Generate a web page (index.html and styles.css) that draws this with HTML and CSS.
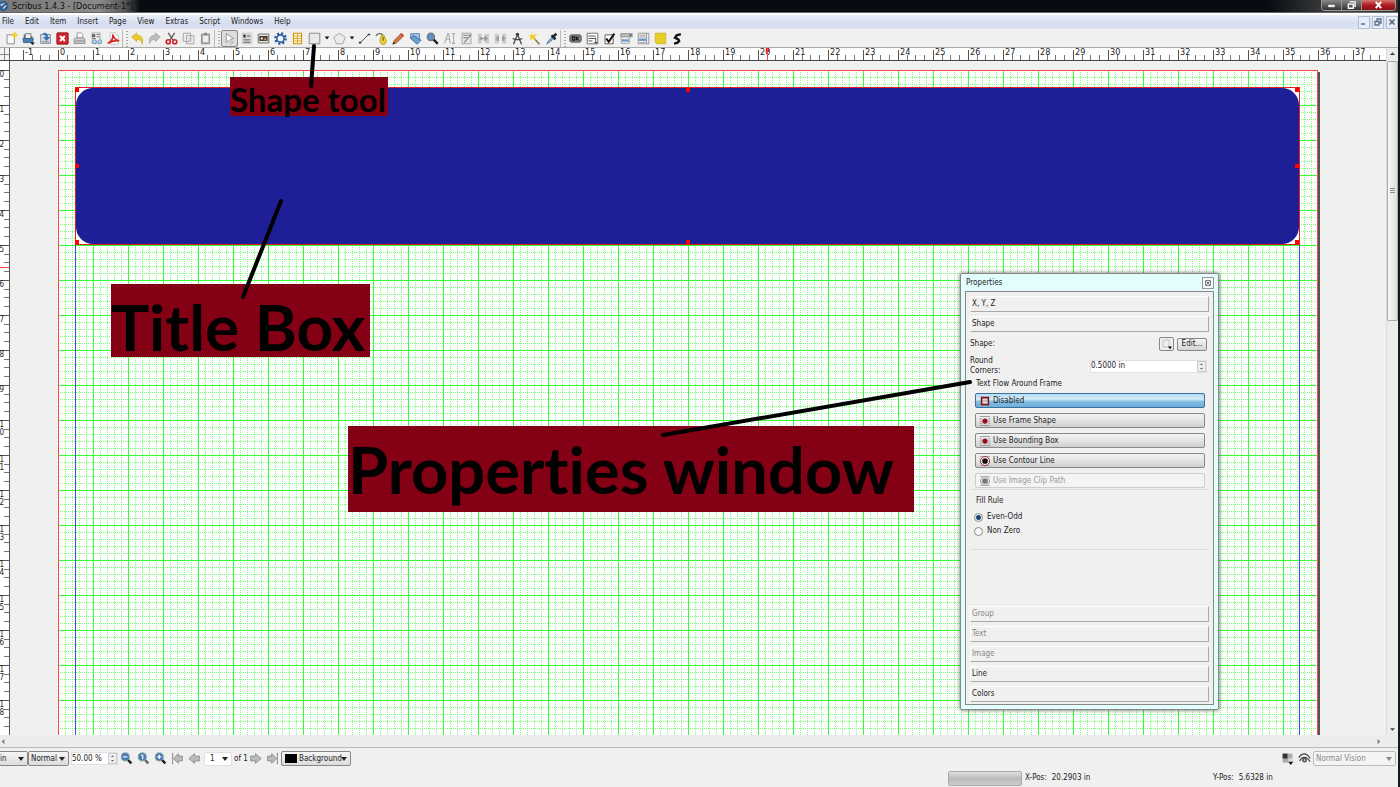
FILE: index.html
```html
<!DOCTYPE html>
<html lang="en">
<head>
<meta charset="utf-8">
<title>Scribus 1.4.3 - [Document-1*]</title>
<link rel="stylesheet" href="styles.css">
</head>
<body>
<div class="app">
  <header class="titlebar">
    <svg class="logo" viewBox="0 0 12 12"><circle cx="4" cy="6" r="6" fill="#2d5f9a"/><path d="M0 4l6-2 2 4-4 4z" fill="#b8cbe2"/><path d="M2 8l5-5" stroke="#15263f" stroke-width="1.5"/></svg>
    <h1 class="title">Scribus 1.4.3 - [Document-1*]</h1>
    <div class="winbtns">
      <button class="winbtn" aria-label="Minimize"><svg viewBox="0 0 10 10"><path d="M1 4h8v3H1z" fill="#fff" stroke="#333" stroke-width=".5"/></svg></button>
      <button class="winbtn" aria-label="Restore"><svg viewBox="0 0 10 10"><path d="M3 1h6v5H8M1.500 3.500h5.500v4.500H1.500z" fill="none" stroke="#fff" stroke-width="1.500"/></svg></button>
      <button class="winbtn close" aria-label="Close"><svg viewBox="0 0 10 10"><path d="M2 1l6 7M8 1L2 8" stroke="#fff" stroke-width="2.200"/></svg></button>
    </div>
  </header>

  <nav class="menubar">
    <a href="#">File</a><a href="#">Edit</a><a href="#">Item</a><a href="#">Insert</a><a href="#">Page</a><a href="#">View</a><a href="#">Extras</a><a href="#">Script</a><a href="#">Windows</a><a href="#">Help</a>
    <div class="mdi">
      <button aria-label="Minimize document"><svg viewBox="0 0 10 10"><path d="M2 7h4" stroke="#5a7088" stroke-width="1.500"/></svg></button>
      <button aria-label="Restore document"><svg viewBox="0 0 10 10"><path d="M4 4V2h4v4H6M2 4.500h4V8H2z" fill="none" stroke="#5a7088" stroke-width="1.300"/></svg></button>
      <button aria-label="Close document"><svg viewBox="0 0 10 10"><path d="M2.500 2.500l5 5M7.500 2.500l-5 5" stroke="#555e68" stroke-width="1.500"/></svg></button>
    </div>
  </nav>

  <div class="toolbar">
    <div class="group">
      <button aria-label="New"><svg viewBox="0 0 16 16"><path d="M2.500 3.500h9v11h-9z" fill="#fafafa" stroke="#777"/><circle cx="12" cy="4" r="3" fill="#f3de3c"/><path d="M12 0v8M8 4h8" stroke="#e8d030"/></svg></button>
      <button aria-label="Open"><svg viewBox="0 0 16 16"><path d="M2 3h5l1 2h5v8H2z" fill="#777"/><path d="M4 2h7v6H4z" fill="#eee" stroke="#666"/><path d="M1 8h13l-1 5H2z" fill="#4a80b8" stroke="#335e8d"/><path d="M10 13h6l-3 3z" fill="#111"/></svg></button>
      <button aria-label="Save"><svg viewBox="0 0 16 16"><path d="M2 3h12v11H2z" fill="#d5dbe1" stroke="#6f8091"/><path d="M6 1c4 0 5 2 5 5h3l-5 5-4-5h3c0-2-1-3-4-3z" fill="#3a73b5"/><path d="M4 12h8" stroke="#678"/></svg></button>
      <button aria-label="Close"><svg viewBox="0 0 16 16"><rect x="1" y="1" width="14" height="14" rx="1" fill="#cf2530" stroke="#941019"/><path d="M5 5l6 6M11 5l-6 6" stroke="#fff" stroke-width="2.500"/></svg></button>
      <button aria-label="Print"><svg viewBox="0 0 16 16"><path d="M5 7V1h5l2 2v4" fill="#fff" stroke="#888"/><path d="M1.500 9l2-2h9l2 2v5h-13z" fill="#ccc" stroke="#777"/><path d="M3 11h10" stroke="#777"/></svg></button>
      <button aria-label="Preflight"><svg viewBox="0 0 16 16"><path d="M2.500 1h10v13h-10z" fill="#f4f4f4" stroke="#aaa"/><path d="M3 3h3v3H3zM8 3h4M8 6h4M3 8h4" stroke="#555" fill="#777"/><circle cx="5.500" cy="12" r="2.500" fill="#b8d2ec" stroke="#5885b3"/><circle cx="12" cy="12" r="2.500" fill="#b8d2ec" stroke="#5885b3"/></svg></button>
      <button aria-label="Export PDF"><svg viewBox="0 0 16 16"><path d="M4 1h6l4 4v10H4z" fill="#fff" stroke="#bbb"/><path d="M1 14c5-3 7-7 6-11 1 5 4 7 8 8-5-1-9 0-14 3z" fill="none" stroke="#d8241c" stroke-width="2"/></svg></button>
    </div>
    <span class="handle"></span>
    <div class="group">
      <button aria-label="Undo"><svg viewBox="0 0 16 16"><path d="M1 6l6-5v3c6 0 8 3 7 11-1-4-3-6-7-6v3z" fill="#edc92a" stroke="#c99d12" stroke-width=".7"/></svg></button>
      <button aria-label="Redo"><svg viewBox="0 0 16 16"><path d="M15 6L9 1v3C3 4 1 7 2 14c1-3 3-5 7-5v3z" fill="#bbb" stroke="#999" stroke-width=".7"/></svg></button>
      <button aria-label="Cut"><svg viewBox="0 0 16 16"><path d="M4 1l6 9M12 1L6 10" stroke="#666" stroke-width="1.800"/><circle cx="4" cy="12" r="2.500" fill="none" stroke="#cc2027" stroke-width="2"/><circle cx="12" cy="12" r="2.500" fill="none" stroke="#cc2027" stroke-width="2"/></svg></button>
      <button aria-label="Copy"><svg viewBox="0 0 16 16"><path d="M1.500 1.500h9v10h-9zM5.500 4.500h9v10h-9z" fill="#eee" stroke="#999"/><path d="M8 8h4M8 10h4" stroke="#bbb"/></svg></button>
      <button aria-label="Paste"><svg viewBox="0 0 16 16"><path d="M3 2.500h10v12H3z" fill="#aaa" stroke="#888"/><path d="M5 4.500h6.500v8H5z" fill="#eee"/><path d="M6 1h4v3H6z" fill="#888"/></svg></button>
    </div>
    <span class="handle"></span>
    <div class="group">
      <button class="pressed" aria-label="Select item"><svg viewBox="0 0 16 16"><path d="M4 2l9 6-4 1 3 4-2 1-3-4-3 3z" fill="#fff" stroke="#888"/></svg></button>
      <button aria-label="Text frame"><svg viewBox="0 0 16 16"><path d="M2.500 1.500h12v13h-12z" fill="#f8f8f8" stroke="#bbb"/><path d="M4 3h3v4H4z" fill="#333"/><path d="M8 4h5M8 6h5M4 9h9M4 11h9M4 13h9" stroke="#555"/></svg></button>
      <button aria-label="Image frame"><svg viewBox="0 0 16 16"><path d="M1.500 2.500h13v11h-13z" fill="#e7e0d5" stroke="#555"/><path d="M3 5h10v6H3z" fill="#333"/><circle cx="6" cy="8" r="1.500" fill="#ddd"/><path d="M8 10l2-4 2 4z" fill="#c58a42"/></svg></button>
      <button aria-label="Render frame"><svg viewBox="0 0 16 16"><circle cx="8" cy="8" r="4.500" fill="#eef3fb" stroke="#2c60ad" stroke-width="2"/><circle cx="8" cy="8" r="6.500" fill="none" stroke="#1f4f9a" stroke-width="2.500" stroke-dasharray="2.500 2.600"/></svg></button>
      <button aria-label="Table"><svg viewBox="0 0 16 16"><path d="M3 1.500h10v13H3z" fill="#fff3c8" stroke="#c79212" stroke-width="1.300"/><path d="M3 5h10M3 8h10M3 11h10M8 2v12" stroke="#d3a024"/></svg></button>
      <button aria-label="Shape"><svg viewBox="0 0 16 16"><path d="M1.500 1.500h13v13h-13z" fill="#e9e9e9" stroke="#777"/></svg></button>
      <button class="drop" aria-label="Shape list"><svg viewBox="0 0 8 8"><path d="M1 2h6L4 6z" fill="#111"/></svg></button>
      <button aria-label="Polygon"><svg viewBox="0 0 16 16"><path d="M8 1.500l7 5-3 8H4l-3-8z" fill="#ececec" stroke="#999"/></svg></button>
      <button class="drop" aria-label="Polygon options"><svg viewBox="0 0 8 8"><path d="M1 2h6L4 6z" fill="#111"/></svg></button>
      <button aria-label="Line"><svg viewBox="0 0 16 16"><path d="M3 13L13 3" stroke="#333"/><path d="M1 12h3v2H1zM12 2h3v2h-3z" fill="#333"/></svg></button>
      <button aria-label="Bezier curve"><svg viewBox="0 0 16 16"><path d="M1 5c2-4 7-4 9-1" fill="none" stroke="#555" stroke-width="1.300"/><path d="M8 4h3l3 7-2 4H8l-2-4z" fill="#f0d52d" stroke="#aa8f13"/><path d="M10 6v5" stroke="#333"/></svg></button>
      <button aria-label="Freehand line"><svg viewBox="0 0 16 16"><path d="M1 15l2-5 8-8 3 3-8 8z" fill="#d37a44" stroke="#8d4720"/><path d="M1 15l1-3 2 2z" fill="#222"/><path d="M11 2l3 3" stroke="#c03b3b" stroke-width="2"/></svg></button>
      <button aria-label="Rotate item"><svg viewBox="0 0 16 16"><path d="M2 2h11v6H2z" fill="#a9c5e2" stroke="#4b79aa"/><path d="M5 4l10 6-5 5-8-7z" fill="#6b9ccc" stroke="#3b6899"/></svg></button>
      <button aria-label="Zoom"><svg viewBox="0 0 16 16"><circle cx="6" cy="6" r="4.500" fill="#5d8fc4" stroke="#777" stroke-width="1.500"/><path d="M9.500 9.500l5 5" stroke="#222" stroke-width="3"/></svg></button>
      <button aria-label="Edit contents"><svg viewBox="0 0 16 16"><path d="M2 14L6 2h1l2 12M3 9h5M11 2h4M13 2v12M11 14h4" fill="none" stroke="#aaa" stroke-width="1.300"/></svg></button>
      <button aria-label="Story editor"><svg viewBox="0 0 16 16"><path d="M2.500 1.500h11v13h-11z" fill="#e8e8e8" stroke="#999"/><path d="M4 4h8M4 7h5M5 13l9-10" stroke="#888" stroke-width="1.500"/></svg></button>
      <button aria-label="Link frames"><svg viewBox="0 0 16 16"><path d="M1 2h5v12H1zM10 2h5v12h-5z" fill="#ccc"/><path d="M3 8h9M9 5l3 3-3 3M5 6v4" fill="none" stroke="#999" stroke-width="2"/></svg></button>
      <button aria-label="Unlink frames"><svg viewBox="0 0 16 16"><path d="M1 2h5v12H1zM10 2h5v12h-5z" fill="#ccc"/><path d="M2 8h4M10 8h4M5 5v6M11 5v6" stroke="#999" stroke-width="2"/></svg></button>
      <button aria-label="Measurements"><svg viewBox="0 0 16 16"><circle cx="8" cy="3" r="2" fill="#333"/><path d="M8 3L3 15M8 3l5 12M2 8c4 2 8 2 12 0" fill="none" stroke="#444" stroke-width="1.500"/></svg></button>
      <button aria-label="Copy properties"><svg viewBox="0 0 16 16"><path d="M7 7l7 8" stroke="#8a7444" stroke-width="2"/><path d="M5 0l1 4 5-2-3 4 2 4-4-2-4 2 1-4-2-2h3z" fill="#f1cf2a"/></svg></button>
      <button aria-label="Eye dropper"><svg viewBox="0 0 16 16"><path d="M2 15l2-4 5-5 2 2-6 5z" fill="#7fa9d5" stroke="#56789b"/><path d="M8 4l5 5M10 6l4-4" stroke="#222" stroke-width="3"/></svg></button>
    </div>
    <span class="handle"></span>
    <div class="group">
      <button aria-label="PDF push button"><svg viewBox="0 0 16 16"><rect x="1" y="3.500" width="14" height="9" rx="2" fill="#888" stroke="#444"/><path d="M4 6h3v4H4zM9 5.500v5M12 6L9.500 8l3 2.500" fill="none" stroke="#111" stroke-width="1.300"/></svg></button>
      <button aria-label="PDF text field"><svg viewBox="0 0 16 16"><path d="M1.500 1.500h13v13h-13z" fill="#fff" stroke="#555"/><path d="M3 5h9M3 8h9M3 11h5M12 7v7M10 13h4" stroke="#333"/></svg></button>
      <button aria-label="PDF check box"><svg viewBox="0 0 16 16"><path d="M2.500 3.500h10v11h-10z" fill="#fff" stroke="#444"/><path d="M4 8l3 4 7-10" fill="none" stroke="#111" stroke-width="2.500"/></svg></button>
      <button aria-label="PDF combo box"><svg viewBox="0 0 16 16"><path d="M1 2h14v4H1z" fill="#bbb" stroke="#888"/><path d="M1.500 6h10v8h-10z" fill="#f0f0f0" stroke="#999"/><path d="M2 9h9v3H2z" fill="#6f9acb"/><path d="M12 3h2v2h-2z" fill="#444"/></svg></button>
      <button aria-label="PDF list box"><svg viewBox="0 0 16 16"><path d="M1.500 1.500h13v13h-13z" fill="#eee" stroke="#888"/><path d="M2 8h9v3H2z" fill="#6f9acb"/><path d="M3 4h7M3 6h7M3 13h7" stroke="#999"/><path d="M11.500 2v12" stroke="#777"/></svg></button>
      <button aria-label="Text annotation"><svg viewBox="0 0 16 16"><path d="M1.500 1.500h13v13h-11l-2-2z" fill="#e8cc29" stroke="#d0b31d"/></svg></button>
      <button aria-label="Link annotation"><svg viewBox="0 0 16 16"><path d="M11 3L7 4 5 7l4 2 1 2-2 2-3 1" fill="none" stroke="#111" stroke-width="3" stroke-linecap="round"/></svg></button>
    </div>
  </div>

  <main class="work">
    <div class="corner"></div>
    <div class="hruler" id="hruler"></div>
    <div class="vruler" id="vruler"></div>
    <section class="canvas">
      <div class="page">
        <svg class="grid" width="100%" height="100%">
          <defs><pattern id="inch" x="-1" y="-1" width="35" height="35" patternUnits="userSpaceOnUse" shape-rendering="crispEdges">
            <path d="M7.500 0v35M14.500 0v35M21.500 0v35M28.500 0v35M0 7.500h35M0 14.500h35M0 21.500h35M0 28.500h35" stroke="#7f7" stroke-dasharray="1 1"/>
            <path d="M.5 0v35M0 .5h35" stroke="#3f3"/>
          </pattern></defs>
          <rect width="100%" height="100%" fill="url(#inch)"/>
        </svg>
        <div class="guide left"></div><div class="guide right"></div>
        <div class="frame"><div class="fill"></div>
          <i class="grip nw"></i><i class="grip n"></i><i class="grip ne"></i><i class="grip w"></i><i class="grip e"></i><i class="grip sw"></i><i class="grip s"></i><i class="grip se"></i>
        </div>
      </div>
    </section>
    <div class="vscroll">
      <svg viewBox="0 0 8 8"><path d="M1 5h6L4 2z" fill="#444"/></svg>
      <div class="thumb"></div>
      <svg viewBox="0 0 8 8"><path d="M1 3h6L4 6z" fill="#444"/></svg>
    </div>
  </main>
  <div class="hscroll">
    <svg viewBox="0 0 8 8"><path d="M5 1v6L2 4z" fill="#777"/></svg>
    <svg viewBox="0 0 8 8"><path d="M3 1v6l3-3z" fill="#777"/></svg>
  </div>

  <footer class="status">
    <div class="viewrow">
      <select class="combo unit" aria-label="Unit"><option>in</option></select>
      <select class="combo quality" aria-label="Preview quality"><option>Normal</option></select>
      <span class="spin zoom"><input value="50.00 %" aria-label="Zoom level"><svg viewBox="0 0 8 12"><path d="M2 4l2-2 2 2zM2 8l2 2 2-2z" fill="#557"/></svg></span>
      <button class="ic" aria-label="Zoom out"><svg viewBox="0 0 16 16"><circle cx="6.500" cy="6" r="5" fill="#4a7bb0" stroke="#8aa" stroke-width="1.200"/><path d="M10 10l4 4" stroke="#222" stroke-width="3"/><path d="M4 6h5" stroke="#fff" stroke-width="1.500"/></svg></button>
      <button class="ic" aria-label="Zoom to 100%"><svg viewBox="0 0 16 16"><circle cx="6.500" cy="6" r="5" fill="#4a7bb0" stroke="#8aa" stroke-width="1.200"/><path d="M10 10l4 4" stroke="#666" stroke-width="3"/><path d="M5 4h2v5" fill="none" stroke="#fff" stroke-width="1.500"/></svg></button>
      <button class="ic" aria-label="Zoom in"><svg viewBox="0 0 16 16"><circle cx="6.500" cy="6" r="5" fill="#4a7bb0" stroke="#8aa" stroke-width="1.200"/><path d="M10 10l4 4" stroke="#222" stroke-width="3"/><path d="M4 6h5M6.500 3.500v5" stroke="#fff" stroke-width="1.500"/></svg></button>
      <button class="ic" aria-label="First page"><svg viewBox="0 0 16 16"><path d="M2 1v14" stroke="#999" stroke-width="1.500"/><path d="M3 8l6-6v3h5v6H9v3z" fill="#bbb" stroke="#888"/></svg></button>
      <button class="ic" aria-label="Previous page"><svg viewBox="0 0 16 16"><path d="M1 8l7-6v3h6v6H8v3z" fill="#bbb" stroke="#888"/></svg></button>
      <select class="combo pageno" aria-label="Page"><option>1</option></select>
      <span class="of">of 1</span>
      <button class="ic" aria-label="Next page"><svg viewBox="0 0 16 16"><path d="M15 8L8 2v3H2v6h6v3z" fill="#bbb" stroke="#888"/></svg></button>
      <button class="ic" aria-label="Last page"><svg viewBox="0 0 16 16"><path d="M14 1v14" stroke="#999" stroke-width="1.500"/><path d="M13 8L7 2v3H2v6h5v3z" fill="#bbb" stroke="#888"/></svg></button>
      <select class="combo layer" aria-label="Layer"><option>Background</option></select>
      <span class="space"></span>
      <button class="ic" aria-label="Preview mode"><svg viewBox="0 0 16 16"><path d="M2 2h12v11H2z" fill="#aaa"/><path d="M2 2h6v6H2z" fill="#333"/><path d="M9 8h5v5H9z" fill="#ddd"/><path d="M9 12h6l-3 4z" fill="#111"/></svg></button>
      <button class="ic" aria-label="Color vision"><svg viewBox="0 0 16 16"><path d="M1 7c4-7 10-6 14 1M2 11c3-6 8-6 13 1" fill="none" stroke="#444" stroke-width="1.500"/><circle cx="8" cy="10" r="3" fill="#555"/><circle cx="8" cy="10" r="1" fill="#eee"/></svg></button>
      <select class="combo vision" aria-label="Vision type" disabled><option>Normal Vision</option></select>
    </div>
    <div class="posrow">
      <div class="bar"></div>
      <span class="pos"><span>X-Pos:</span><output>20.2903 in</output></span>
      <span class="pos"><span>Y-Pos:</span><output>5.6328 in</output></span>
    </div>
  </footer>

  <aside class="props">
    <div class="props-head"><h2>Properties</h2><button aria-label="Close properties"><svg viewBox="0 0 10 10"><path d="M2 2h6v6H2zM3 3l4 4M7 3L3 7" fill="none" stroke="#555"/></svg></button></div>
    <div class="props-body">
      <button class="tab">X, Y, Z</button>
      <button class="tab">Shape</button>
      <div class="row shape-row"><span class="grow">Shape:</span><button class="pick" aria-label="Choose shape"><svg viewBox="0 0 14 14"><path d="M2.500 2.500h7v8h-7z" fill="#eee" stroke="#bbb"/><path d="M8 10h5l-2.500 3z" fill="#111"/></svg></button><button class="edit">Edit...</button></div>
      <div class="row corner-row"><label class="grow" for="rc">Round<br>Corners:</label><span class="spin radius"><input id="rc" value="0.5000 in"><svg viewBox="0 0 8 12"><path d="M2 4l2-2 2 2zM2 8l2 2 2-2z" fill="#557"/></svg></span></div>
      <fieldset class="flowset">
        <legend>Text Flow Around Frame</legend>
        <button class="opt on"><svg viewBox="0 0 16 16"><path d="M1 2h14M1 8h14M1 14h14" stroke="#999"/><path d="M3.500 3.500h9v9h-9z" fill="#ddd" stroke="#8d0a1c" stroke-width="2"/><path d="M4 8h8" stroke="#888"/></svg>Disabled</button>
        <button class="opt"><svg viewBox="0 0 16 16"><path d="M1 2h14M1 5h3M12 5h3M1 8h3M12 8h3M1 11h3M12 11h3M1 14h14" stroke="#888"/><circle cx="8" cy="8" r="3.500" fill="#9d0d20"/></svg>Use Frame Shape</button>
        <button class="opt"><svg viewBox="0 0 16 16"><path d="M1 2h14M1 5h3M12 5h3M1 8h3M12 8h3M1 11h3M12 11h3M1 14h14" stroke="#888"/><circle cx="8" cy="8" r="3.500" fill="#9d0d20"/></svg>Use Bounding Box</button>
        <button class="opt"><svg viewBox="0 0 16 16"><path d="M1 2h14M1 14h14" stroke="#999"/><circle cx="8" cy="8" r="6" fill="#fff" stroke="#a02030" stroke-width="1.300"/><circle cx="8" cy="8" r="3.800" fill="#111"/></svg>Use Contour Line</button>
        <button class="opt" disabled><svg viewBox="0 0 16 16"><path d="M1 2h14M1 14h14" stroke="#aaa"/><circle cx="8" cy="8" r="6" fill="#eee" stroke="#999" stroke-width="1.300"/><circle cx="8" cy="8" r="3.800" fill="#777"/></svg>Use Image Clip Path</button>
      </fieldset>
      <fieldset class="ruleset">
        <legend>Fill Rule</legend>
        <label><input type="radio" name="rule" checked>Even-Odd</label>
        <label><input type="radio" name="rule">Non Zero</label>
      </fieldset>
      <div class="tabs-end">
        <button class="tab" disabled>Group</button>
        <button class="tab" disabled>Text</button>
        <button class="tab" disabled>Image</button>
        <button class="tab">Line</button>
        <button class="tab">Colors</button>
      </div>
    </div>
  </aside>

  <div class="note note-shape">Shape tool</div>
  <div class="note note-title">Title Box</div>
  <div class="note note-props">Properties window</div>
  <svg class="leaders" width="1000" height="450"><g stroke="#000" stroke-width="4" stroke-linecap="round"><path d="M314 46L311 86"/><path d="M281 201L243 297"/><path d="M663 435L970 382"/></g></svg>
</div>
<script src="rulers.js"></script>
</body>
</html>
```
FILE: rulers.js
```js
function fill(id, from, to) {
  const ruler = document.getElementById(id);
  for (let n = from; n <= to; n++) {
    const cell = document.createElement('span');
    cell.className = 'cell';
    cell.textContent = n;
    ruler.append(cell);
  }
  const mark = document.createElement('i');
  mark.className = 'mark';
  ruler.append(mark);
}
fill('hruler', -1, 37);
fill('vruler', 0, 18);
```
FILE: styles.css
```css
* { box-sizing: border-box; }
body {
  margin: 0;
  font: 8px/10px "DejaVu Sans Condensed", "DejaVu Sans", sans-serif;
  color: #222;
  background: #f0f0f0;
}
button, input, select { font: inherit; color: inherit; margin: 0; padding: 0; }
button { background: none; border: 0; display: flex; align-items: center; justify-content: center; }
a { color: inherit; text-decoration: none; }
h1, h2 { margin: 0; font-weight: normal; }
svg { display: block; }

.app {
  position: relative;
  display: flex;
  flex-direction: column;
  height: 100vh;
  overflow: hidden;
  border-right: 2px solid #15181c;
}

.titlebar {
  display: flex;
  flex: none;
  height: 13px;
  background: linear-gradient(90deg, #777 0, #8a8a8a 100px, #555 125px, #070c13 140px, #070c13 calc(100% - 130px), #444 calc(100% - 60px), #333);
  border-bottom: 1px solid #666;
}
.logo { width: 10px; height: 12px; }
.title { flex: 1; padding-left: 2px; font-size: 9px; line-height: 12px; color: #111; }
.winbtns { display: flex; height: 11px; border: 1px solid #999; border-top: 0; border-radius: 0 0 4px 4px; overflow: hidden; margin-right: 2px; }
.winbtn { width: 20px; background: linear-gradient(#888, #333); border-right: 1px solid #999; }
.winbtn svg { width: 9px; height: 9px; }
.winbtn.close { width: 33px; background: linear-gradient(#d47a70, #b01c24 50%, #8d1118); border: 0; }

.menubar {
  display: flex;
  flex: none;
  align-items: center;
  gap: 11px;
  height: 16px;
  padding-left: 2px;
  border-top: 2px solid #fff;
  background: linear-gradient(#e9eef8, #d5ddee 60%, #dbe2f2);
}
.mdi { display: flex; gap: 2px; margin-left: auto; }
.mdi button { width: 12px; height: 13px; border: 1px solid #b2bfd3; background: #e6edf8; }
.mdi svg { width: 10px; height: 10px; }

.toolbar {
  display: flex;
  flex: none;
  align-items: center;
  height: 19px;
  padding-left: 3px;
  background: #f0f0f0;
  border-bottom: 1px solid #aaa;
}
.group { display: flex; align-items: center; }
.group button { width: 17px; height: 17px; }
.group svg { width: 13px; height: 13px; }
.group button.drop { width: 8px; }
.group .drop svg { width: 6px; height: 6px; }
.group .pressed { background: #dcdcdc; border: 1px solid #888; border-radius: 2px; }
.handle { width: 7px; height: 17px; border-left: 1px solid #bbb; background: radial-gradient(circle, #aaa 1px, transparent 1px) 2px 0 / 4px 3px repeat-y; }

.work {
  display: grid;
  flex: 1;
  min-height: 0;
  grid-template: 13px 1fr / 10px 1fr 12px;
}
.corner { border-bottom: 1px solid #444; border-right: 1px solid #666; background: linear-gradient(#888, #888) 4px 0 / 1px 100% no-repeat, linear-gradient(#888, #888) 0 6px / 100% 1px no-repeat, #f4f4f4; }
.hruler, .vruler { position: relative; display: flex; overflow: hidden; background: #fff; }
.hruler { border-bottom: 1px solid #444; padding-left: 13px; }
.cell { flex: none; }
.hruler .cell {
  width: 35px;
  padding-left: 2px;
  font-size: 9px;
  line-height: 9px;
  background:
    linear-gradient(#555, #555) 0 2px / 1px 10px no-repeat,
    linear-gradient(#777, #777) 9px 7px / 1px 5px no-repeat,
    linear-gradient(#777, #777) 17px 7px / 1px 5px no-repeat,
    linear-gradient(#777, #777) 26px 7px / 1px 5px no-repeat;
}
.vruler { flex-direction: column; border-right: 1px solid #555; padding-top: 9px; }
.vruler .cell {
  width: 9px;
  height: 35px;
  padding: 1px 5px 0 0;
  overflow: hidden;
  word-break: break-all;
  direction: rtl;
  line-height: 8px;
  background:
    linear-gradient(#555, #555) 0 0 / 9px 1px no-repeat,
    linear-gradient(#777, #777) 4px 9px / 5px 1px no-repeat,
    linear-gradient(#777, #777) 4px 17px / 5px 1px no-repeat,
    linear-gradient(#777, #777) 4px 26px / 5px 1px no-repeat;
}
.mark { position: absolute; background: #f44; }
.hruler .mark { left: 757px; top: 0; width: 1px; height: 12px; box-shadow: 0 -9px 0 1px #f00; }
.vruler .mark { left: 0; top: 206px; width: 9px; height: 1px; }

.canvas { position: relative; overflow: hidden; background: #f0f0f0; }
.page {
  position: absolute;
  left: 48px;
  top: 9px;
  width: 1260px;
  height: 1000px;
  border: 1px solid #f44;
  box-shadow: 2px 2px 0 #555;
  background: #fff;
}
.grid { position: absolute; inset: 0; }
.guide { position: absolute; top: 17px; bottom: 0; width: 1px; background: #44e; }
.guide.left { left: 16px; }
.guide.right { right: 17px; }
.frame { position: absolute; left: 16px; top: 16px; width: 1225px; height: 158px; border: 1px solid #d22; background: #fff; }
.fill { height: 100%; background: #1e1e96; border-radius: 17px; }
.grip { position: absolute; width: 4px; height: 4px; background: #f00; }
.nw, .n, .ne { top: 0; }
.sw, .s, .se { bottom: 0; }
.nw, .w, .sw { left: -1px; }
.ne, .e, .se { right: 0; }
.n, .s { left: calc(50% - 2px); }
.w, .e { top: calc(50% - 2px); }

.vscroll { grid-column: 3; grid-row: 1 / 3; display: flex; flex-direction: column; align-items: center; padding: 2px 0; background: #ececec; border-left: 1px solid #ddd; }
.vscroll svg { width: 7px; height: 8px; }
.vscroll .thumb { width: 11px; height: 260px; margin: 3px 0 auto; border: 1px solid #aaa; border-radius: 1px; background: repeating-linear-gradient(#888 0 1px, #eee 1px 2px) center / 5px 6px no-repeat, linear-gradient(90deg, #f8f8f8, #ddd); }
.hscroll { display: flex; flex: none; align-items: center; justify-content: space-between; height: 13px; padding-right: 16px; background: #ececec; border-bottom: 1px solid #bbb; }
.hscroll svg { width: 7px; height: 7px; }

.status { flex: none; background: #f0f0f0; }
.viewrow { display: flex; align-items: center; height: 21px; padding-right: 2px; }
.combo {
  --arrow: url("data:image/svg+xml,%3Csvg xmlns='http://www.w3.org/2000/svg' width='6' height='4'%3E%3Cpath d='M0 0h6L3 4z' fill='%23222'/%3E%3C/svg%3E");
  appearance: none;
  height: 15px;
  padding-left: 3px;
  border: 1px solid #888;
  border-radius: 2px;
  background: var(--arrow) right 3px center no-repeat, linear-gradient(#f5f5f5, #dcdcdc);
}
.unit { width: 28px; padding-left: 0; border-left: 0; border-radius: 0 2px 2px 0; }
.quality { width: 41px; padding-left: 2px; margin-right: 2px; }
.spin { display: flex; height: 13px; background: #fff; border: 1px solid #e0e0e0; }
.spin input { flex: 1; min-width: 0; border: 0; background: none; }
.spin svg { width: 9px; height: 11px; background: #eee; border: 1px solid #ccc; }
.zoom { width: 47px; }
.ic { width: 17px; height: 17px; }
.ic svg { width: 13px; height: 13px; }
.combo.pageno { width: 28px; height: 14px; margin: 0 2px 0 1px; padding-left: 5px; border-color: #e0e0e0; background: var(--arrow) right 3px center no-repeat, #fff; }
.of { width: 13px; white-space: nowrap; }
.combo.layer { width: 70px; padding-left: 17px; background: linear-gradient(#000, #000) 3px center / 12px 9px no-repeat, var(--arrow) right 3px center no-repeat, linear-gradient(#f5f5f5, #dcdcdc); }
.space { flex: 1; }
.combo.vision {
  --arrow: url("data:image/svg+xml,%3Csvg xmlns='http://www.w3.org/2000/svg' width='6' height='4'%3E%3Cpath d='M0 0h6L3 4z' fill='%23888'/%3E%3C/svg%3E");
  width: 83px;
  padding-left: 2px;
  color: #888;
  opacity: 1;
  border-color: #bbb;
  background: var(--arrow) right 3px center no-repeat, #f4f4f4;
}
.posrow { display: flex; align-items: center; justify-content: flex-end; height: 18px; }
.bar { width: 74px; height: 15px; margin-right: 3px; border: 1px solid #aaa; border-radius: 2px; background: linear-gradient(#e0e0e0, #bbb 50%, #ccc); }
.pos { display: flex; gap: 5px; width: 188px; }
.pos:last-child { width: 185px; }

.props {
  position: absolute;
  left: 960px;
  top: 273px;
  width: 259px;
  height: 437px;
  display: flex;
  flex-direction: column;
  padding: 0 4px 4px;
  border: 1px solid #888;
  border-radius: 2px;
  background: #e3fdfd;
  box-shadow: 0 0 4px rgba(0, 0, 0, .6);
}
.props-head { display: flex; align-items: center; justify-content: space-between; height: 17px; padding-left: 1px; }
.props-head h2 { font-size: 8px; }
.props-head button { width: 12px; height: 12px; border: 1px solid #999; background: #f4fafa; }
.props-head svg { width: 8px; height: 8px; }
.props-body { flex: 1; display: flex; flex-direction: column; gap: 4px; padding: 4px 4px 2px; border: 1px solid #888; background: #f0f0f0; }
.tab { flex: none; width: 100%; height: 16px; padding-left: 1px; justify-content: flex-start; border: 1px solid; border-color: #fff #aaa #aaa #fff; }
.tab:disabled { color: #888; }
.row { display: flex; align-items: center; }
.grow { flex: 1; }
.shape-row { height: 16px; gap: 3px; }
.pick { width: 15px; height: 14px; border: 1px solid #888; border-radius: 2px; background: #eee; }
.pick svg { width: 12px; height: 12px; }
.edit { width: 30px; height: 13px; margin-right: 2px; border: 1px solid #888; border-radius: 2px; background: linear-gradient(#f5f5f5, #d5d5d5); }
.corner-row { height: 20px; }
.radius { width: 117px; margin-right: 2px; }
fieldset { margin: 0; padding: 0 4px; border: 0; border-bottom: 1px solid #ddd; min-width: 0; }
legend { padding: 0 2px; }
.flowset { height: 110px; }
.flowset legend { line-height: 8px; }
.opt { width: 230px; max-width: 100%; height: 15px; margin: 5px 0 0 1px; padding-left: 2px; gap: 1px; justify-content: flex-start; border: 1px solid #888; border-radius: 2px; background: linear-gradient(#f4f4f4, #e4e4e4 50%, #cfcfcf); }
.opt svg { width: 14px; height: 12px; }
.opt.on { border-color: #3a6fa0; background: linear-gradient(#b5dcf3, #d3ecf9 40%, #7fbbe0 60%, #6fb0dc); }
.opt:disabled { color: #999; border-color: #ccc; background: #f4f4f4; }
.ruleset { height: 54px; margin-top: 2px; }
.ruleset label { display: flex; align-items: center; gap: 4px; height: 14px; }
.ruleset legend { margin-bottom: 4px; }
.ruleset input { appearance: none; width: 9px; height: 9px; border: 1px solid #888; border-radius: 50%; background: #fafafa; }
.ruleset input:checked { background: radial-gradient(circle, #1c4675 0 2px, #fafafa 3px); }
.tabs-end { display: flex; flex-direction: column; gap: 4px; margin-top: auto; }

.note { position: absolute; background: #840014; color: #000; font-family: Lato, Carlito, sans-serif; font-weight: bold; font-variant-ligatures: none; white-space: nowrap; }
.note-shape { left: 230px; top: 77px; width: 158px; height: 39px; font-size: 33px; line-height: 44px; }
.note-title { left: 111px; top: 284px; width: 259px; height: 73px; font-size: 64px; line-height: 86px; }
.note-props { left: 348px; top: 426px; width: 566px; height: 86px; font-size: 65px; line-height: 86px; }
.leaders { position: absolute; left: 0; top: 0; pointer-events: none; }
```
